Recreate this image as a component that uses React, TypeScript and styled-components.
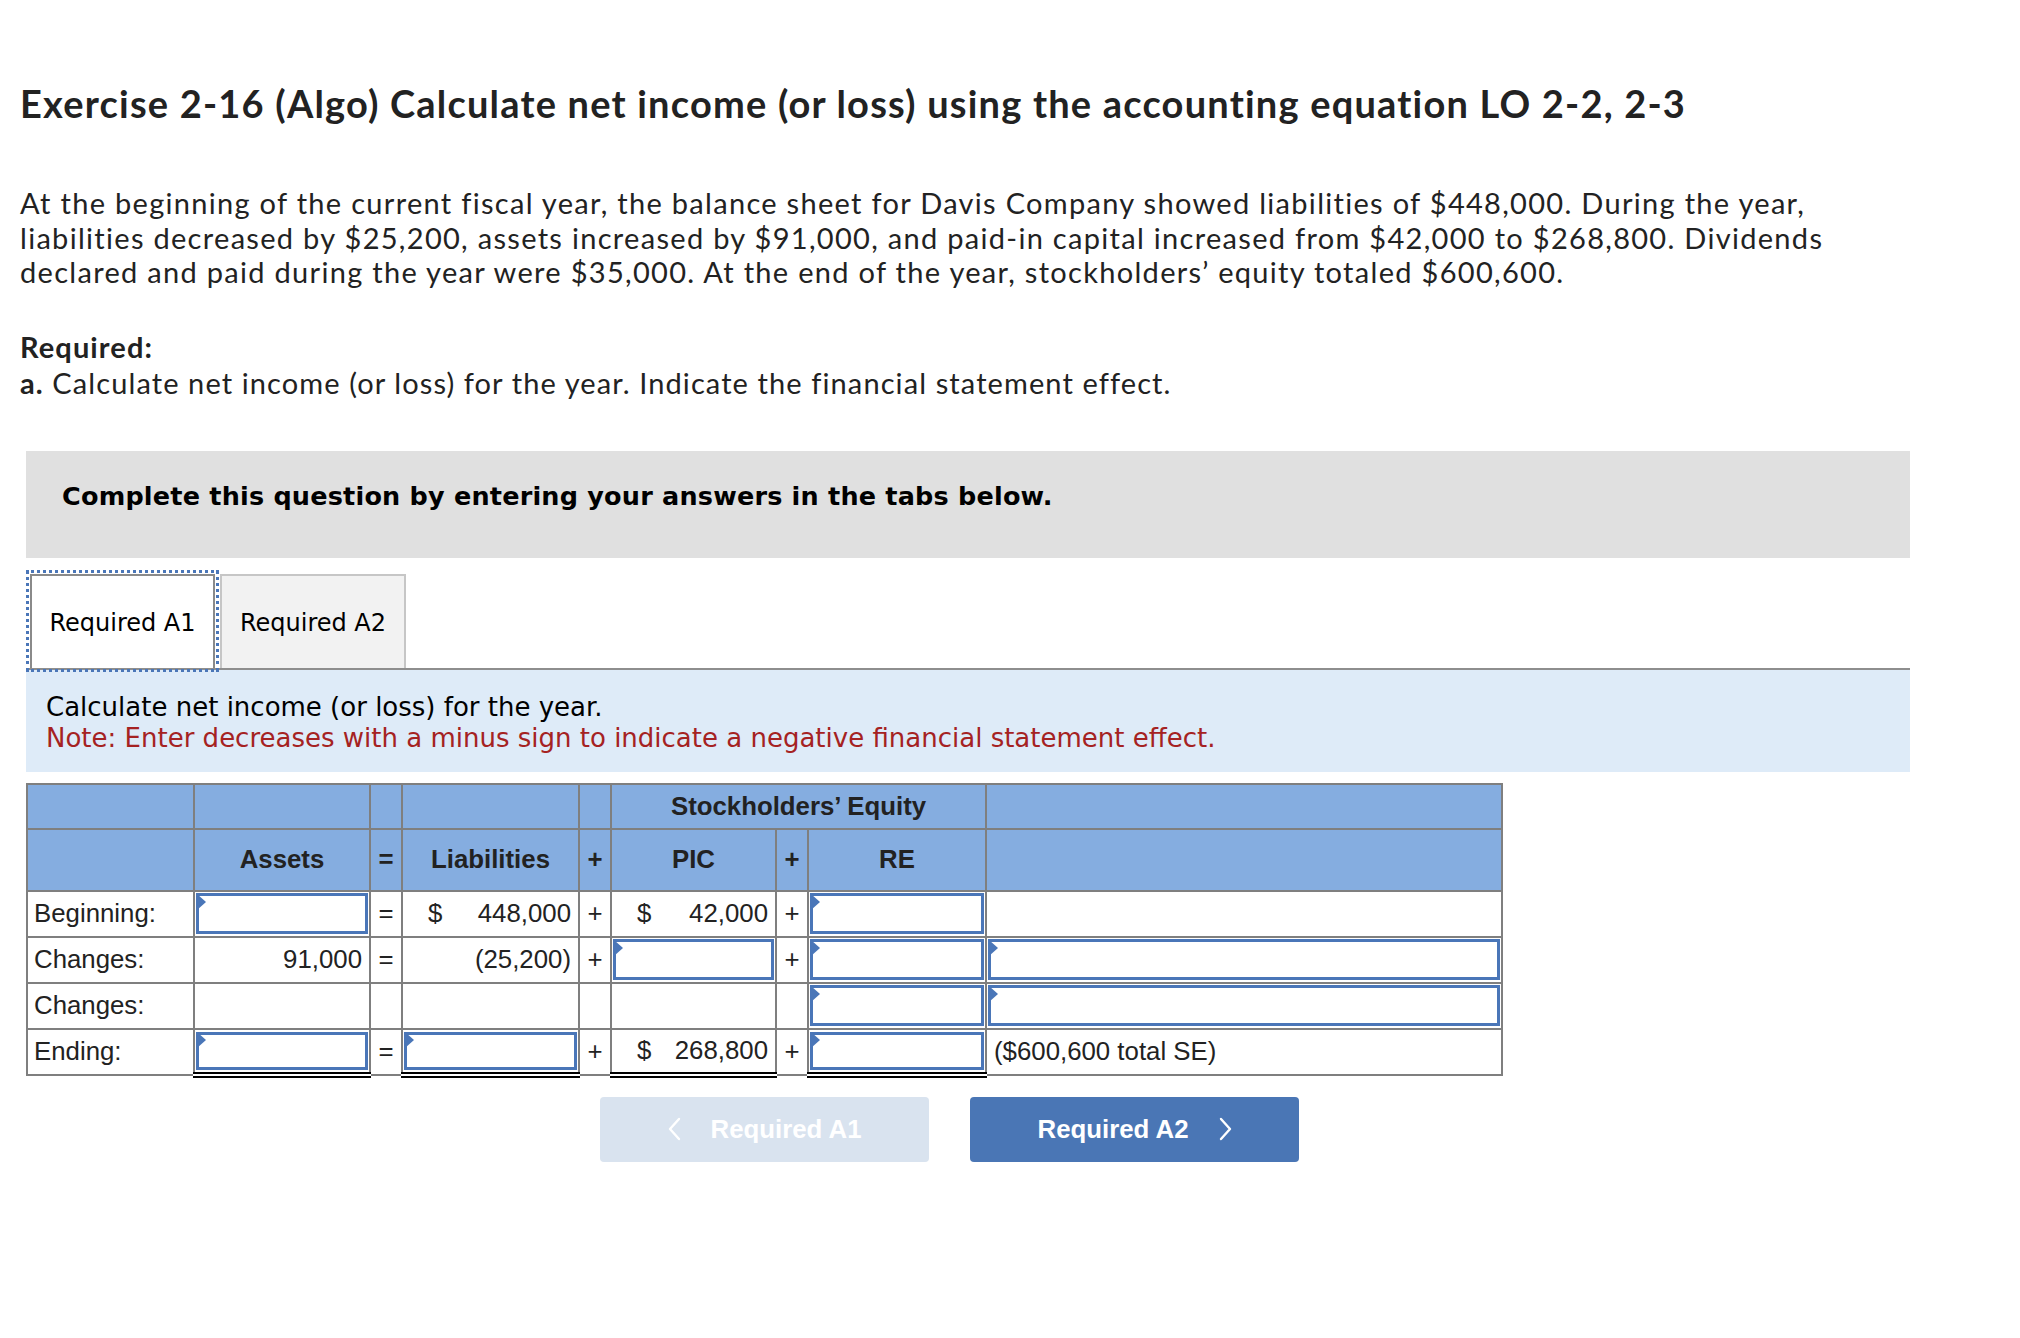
import React from "react";
import styled, { createGlobalStyle } from "styled-components";

const GlobalStyle = createGlobalStyle`
  body {
    margin: 0;
    background: #ffffff;
    font-family: Lato, "Open Sans", sans-serif;
    color: #222;
  }
`;

const Page = styled.div`
  padding: 80px 20px 60px 20px;
`;

const Title = styled.h1`
  margin: 0;
  font-family: Lato, sans-serif;
  font-weight: 700;
  font-size: 38px;
  line-height: 46px;
  letter-spacing: 1.2px;
  color: #222;
`;

const Intro = styled.p`
  margin: 60px 0 0 0;
  width: 1850px;
  font-size: 29px;
  line-height: 34.5px;
  letter-spacing: 1.3px;
  color: #222;
`;

const RequiredBlock = styled.div`
  margin-top: 39px;
  font-size: 29px;
  line-height: 36px;
  letter-spacing: 1.1px;
  color: #222;
`;

const Bold = styled.span`
  font-weight: 700;
`;

const Section = styled.div`
  margin: 50px 0 0 6px;
  width: 1884px;
`;

const Instruction = styled.div`
  box-sizing: border-box;
  height: 107px;
  padding: 30px 36px 0 36px;
  background: #e0e0e0;
  font-family: "DejaVu Sans", Verdana, sans-serif;
  font-weight: 700;
  font-size: 25.5px;
  line-height: 30px;
  letter-spacing: 0.2px;
  color: #000;
`;

const TabBar = styled.div`
  display: flex;
  align-items: flex-end;
  margin-top: 16px;
  padding-left: 4px;
  border-bottom: 2px solid #8e8e8e;
`;

const Tab = styled.button<{ $active?: boolean }>`
  box-sizing: border-box;
  width: ${(p) => (p.$active ? "185px" : "186px")};
  height: 94px;
  margin-left: ${(p) => (p.$active ? "0" : "5px")};
  padding: 2px 0 0 0;
  border: 2px solid ${(p) => (p.$active ? "#8a8a8a" : "#c6c6c6")};
  border-bottom: none;
  background: ${(p) => (p.$active ? "#ffffff" : "#f2f2f2")};
  outline: ${(p) => (p.$active ? "3px dotted #4a76b8" : "none")};
  outline-offset: 1px;
  font-family: "DejaVu Sans", Verdana, sans-serif;
  font-size: 24px;
  color: #000;
  cursor: pointer;
`;

const InfoPanel = styled.div`
  box-sizing: border-box;
  height: 102px;
  padding: 22px 20px 0 20px;
  background: #deebf8;
  font-family: "DejaVu Sans", Verdana, sans-serif;
  font-size: 26px;
  line-height: 31px;
  color: #000;
`;

const Note = styled.div`
  color: #a52222;
`;

const Sheet = styled.table`
  margin-top: 11px;
  border-collapse: collapse;
  table-layout: fixed;
  width: 1475px;
  font-family: "Liberation Sans", Arial, sans-serif;
  font-size: 25.8px;
  color: #222;
`;

const HeadRow = styled.tr<{ $h: number }>`
  height: ${(p) => p.$h}px;
  background: #85ade0;
`;

const BodyRow = styled.tr`
  height: 46px;
`;

const Th = styled.th`
  border: 2px solid #7f7f7f;
  padding: 0;
  font-weight: 700;
  text-align: center;
  color: #222;
`;

const Td = styled.td<{ $align?: string; $total?: boolean }>`
  position: relative;
  border: 2px solid #7f7f7f;
  padding: 0 7px;
  text-align: ${(p) => p.$align || "left"};
  white-space: nowrap;
  ${(p) =>
    p.$total
      ? `border-top: 2px solid #000; border-bottom: 6px double #000;`
      : ""}
`;

const InputTd = styled(Td)`
  padding: 1px;
`;

const Field = styled.div<{ $total?: boolean }>`
  box-sizing: border-box;
  height: ${(p) => (p.$total ? "38px" : "41px")};
  border: 3px solid #4a76b8;
  background: #fff;
`;

const Marker = styled.span`
  position: absolute;
  left: 2px;
  top: 2px;
  width: 0;
  height: 0;
  border-top: 8px solid transparent;
  border-bottom: 8px solid transparent;
  border-left: 9px solid #4a76b8;
`;

const Money = styled.div`
  display: flex;
  justify-content: space-between;
  padding-left: 18px;
`;

const Label = styled(Td)`
  padding-left: 6px;
`;

const NavRow = styled.div`
  display: flex;
  justify-content: center;
  gap: 41px;
  width: 1847px;
  margin-top: 19px;
`;

const NavButton = styled.button<{ $disabled?: boolean }>`
  display: flex;
  align-items: center;
  justify-content: center;
  gap: 30px;
  width: 329px;
  height: 65px;
  border: none;
  border-radius: 4px;
  background: ${(p) => (p.$disabled ? "#d9e3ef" : "#4a76b5")};
  color: #fff;
  font-family: "Liberation Sans", Arial, sans-serif;
  font-weight: 700;
  font-size: 25.8px;
  cursor: ${(p) => (p.$disabled ? "default" : "pointer")};
`;

const Chevron = ({ dir }: { dir: "left" | "right" }) => (
  <svg width="13" height="24" viewBox="0 0 13 24" fill="none">
    <polyline
      points={dir === "left" ? "11,2 2,12 11,22" : "2,2 11,12 2,22"}
      stroke="#fff"
      strokeWidth="2.4"
      strokeLinecap="round"
      strokeLinejoin="round"
    />
  </svg>
);

const Input = ({ total }: { total?: boolean }) => (
  <InputTd $total={total}>
    <Field $total={total} />
    <Marker />
  </InputTd>
);

const Amount = ({ value, total }: { value: string; total?: boolean }) => (
  <Td $total={total}>
    <Money>
      <span>$</span>
      <span>{value}</span>
    </Money>
  </Td>
);

const Sign = ({ s }: { s: string }) => <Td $align="center">{s}</Td>;

const App = () => {
  return (
    <Page>
      <GlobalStyle />
      <Title>
        Exercise 2-16 (Algo) Calculate net income (or loss) using the
        accounting equation LO 2-2, 2-3
      </Title>
      <Intro>
        At the beginning of the current fiscal year, the balance sheet for
        Davis Company showed liabilities of $448,000. During the year,
        liabilities decreased by $25,200, assets increased by $91,000, and
        paid-in capital increased from $42,000 to $268,800. Dividends declared
        and paid during the year were $35,000. At the end of the year,
        stockholders’ equity totaled $600,600.
      </Intro>
      <RequiredBlock>
        <Bold>Required:</Bold>
        <div>
          <Bold>a.</Bold> Calculate net income (or loss) for the year.
          Indicate the financial statement effect.
        </div>
      </RequiredBlock>

      <Section>
        <Instruction>
          Complete this question by entering your answers in the tabs below.
        </Instruction>
        <TabBar>
          <Tab $active>Required A1</Tab>
          <Tab>Required A2</Tab>
        </TabBar>
        <InfoPanel>
          <div>Calculate net income (or loss) for the year.</div>
          <Note>
            Note: Enter decreases with a minus sign to indicate a negative
            financial statement effect.
          </Note>
        </InfoPanel>

        <Sheet>
          <colgroup>
            <col style={{ width: 167 }} />
            <col style={{ width: 176 }} />
            <col style={{ width: 32 }} />
            <col style={{ width: 177 }} />
            <col style={{ width: 32 }} />
            <col style={{ width: 165 }} />
            <col style={{ width: 32 }} />
            <col style={{ width: 178 }} />
            <col style={{ width: 516 }} />
          </colgroup>
          <thead>
            <HeadRow $h={45}>
              <Th />
              <Th />
              <Th />
              <Th />
              <Th />
              <Th colSpan={3}>Stockholders’ Equity</Th>
              <Th />
            </HeadRow>
            <HeadRow $h={62}>
              <Th />
              <Th>Assets</Th>
              <Th>=</Th>
              <Th>Liabilities</Th>
              <Th>+</Th>
              <Th>PIC</Th>
              <Th>+</Th>
              <Th>RE</Th>
              <Th />
            </HeadRow>
          </thead>
          <tbody>
            <BodyRow>
              <Label>Beginning:</Label>
              <Input />
              <Sign s="=" />
              <Amount value="448,000" />
              <Sign s="+" />
              <Amount value="42,000" />
              <Sign s="+" />
              <Input />
              <Td />
            </BodyRow>
            <BodyRow>
              <Label>Changes:</Label>
              <Td $align="right">91,000</Td>
              <Sign s="=" />
              <Td $align="right">(25,200)</Td>
              <Sign s="+" />
              <Input />
              <Sign s="+" />
              <Input />
              <Input />
            </BodyRow>
            <BodyRow>
              <Label>Changes:</Label>
              <Td />
              <Td />
              <Td />
              <Td />
              <Td />
              <Td />
              <Input />
              <Input />
            </BodyRow>
            <BodyRow>
              <Label>Ending:</Label>
              <Input total />
              <Sign s="=" />
              <Input total />
              <Sign s="+" />
              <Amount value="268,800" total />
              <Sign s="+" />
              <Input total />
              <Td>($600,600 total SE)</Td>
            </BodyRow>
          </tbody>
        </Sheet>

        <NavRow>
          <NavButton $disabled disabled>
            <Chevron dir="left" />
            <span>Required A1</span>
          </NavButton>
          <NavButton>
            <span>Required A2</span>
            <Chevron dir="right" />
          </NavButton>
        </NavRow>
      </Section>
    </Page>
  );
};

export default App;
